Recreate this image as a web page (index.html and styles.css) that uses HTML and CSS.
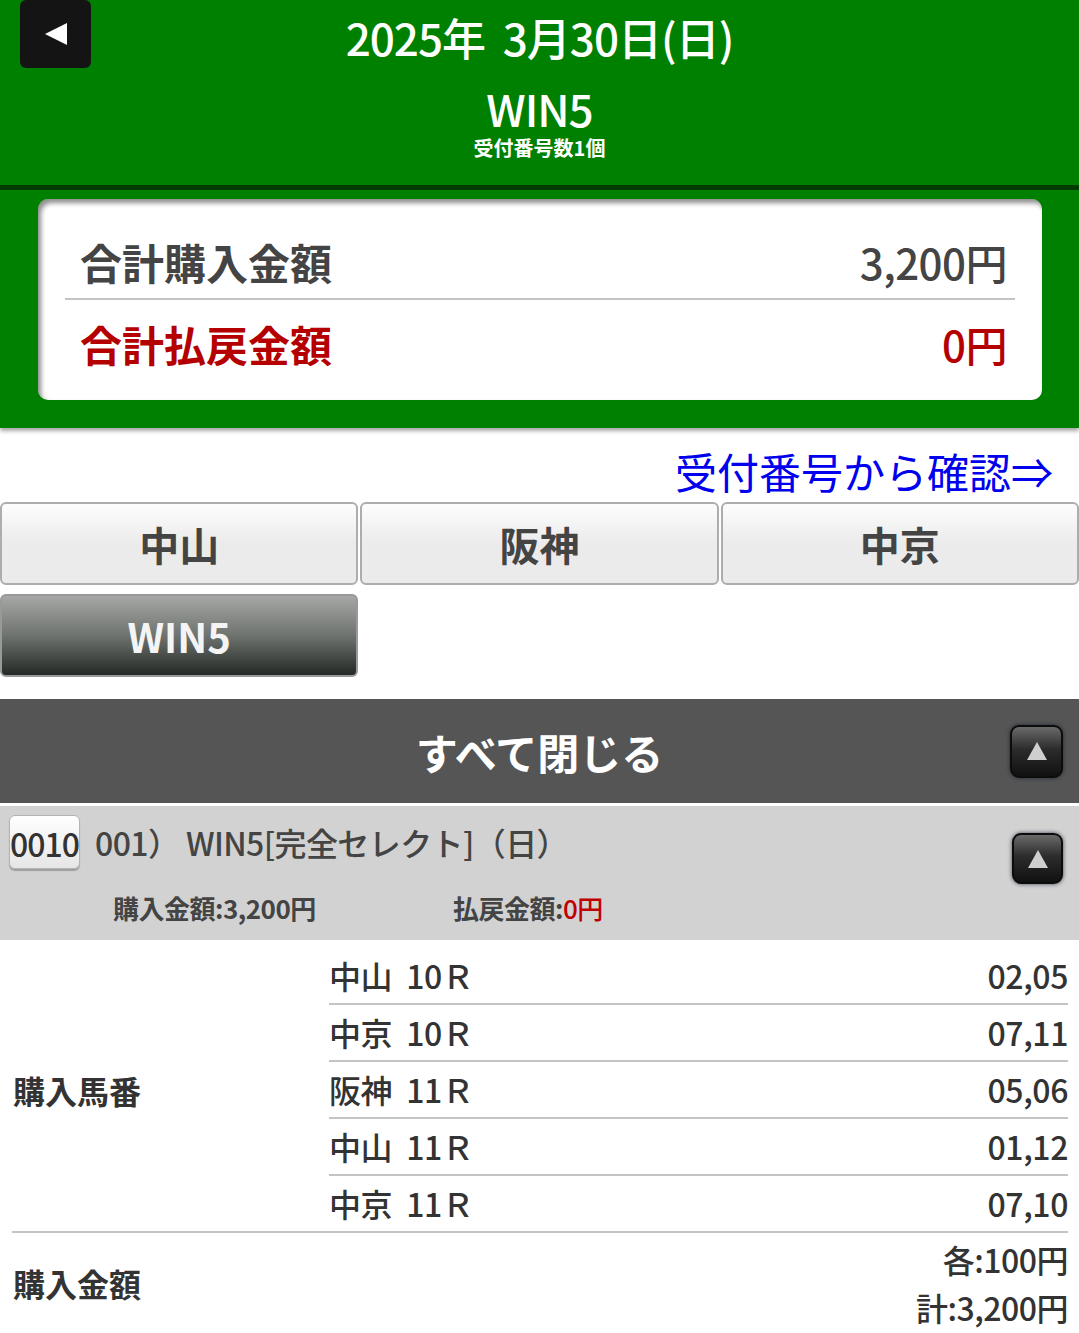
FILE: index.html
```html
<!DOCTYPE html>
<html lang="ja">
<head>
  <meta charset="UTF-8" />
  <meta name="viewport" content="width=device-width, initial-scale=1.0"/>
  <title>WIN5 照会結果</title>
  <link rel="stylesheet" href="styles.css">
</head>
<body>
  <header class="top-bar">
    <a href="#" class="back-btn">
      <svg width="22" height="22" viewBox="0 0 22 22"><polygon points="0,11 22,0 22,22" fill="#fff"/></svg>
    </a>
    <h1 class="race-date">2025年&nbsp;&nbsp;3月30日(日)</h1>
    <div class="bet-type">WIN5</div>
    <div class="ticket-count">受付番号数1個</div>
  </header>

  <section class="summary">
    <div class="summary-card">
      <div class="summary-row">
        <span class="summary-label">合計購入金額</span>
        <span class="summary-value">3,200円</span>
      </div>
      <div class="summary-row refund">
        <span class="summary-label">合計払戻金額</span>
        <span class="summary-value">0円</span>
      </div>
    </div>
  </section>

  <div class="confirm-link">
    <a href="#">受付番号から確認⇒</a>
  </div>

  <nav class="venue-tabs">
    <button class="venue-tab">中山</button>
    <button class="venue-tab">阪神</button>
    <button class="venue-tab">中京</button>
    <button class="venue-tab active">WIN5</button>
  </nav>

  <div class="collapse-all">
    <span></span>
    <span class="collapse-title">すべて閉じる</span>
    <button class="toggle-btn">
      <svg width="20" height="18" viewBox="0 0 20 18"><polygon points="10,0 20,18 0,18" fill="#cfcfcf"/></svg>
    </button>
  </div>

  <div class="ticket-head">
    <div class="ticket-info">
      <div class="ticket-title">
        <span class="ticket-no">0010</span>
        <span>001）&nbsp;WIN5[完全セレクト]（日）</span>
      </div>
      <div class="ticket-amounts">
        <span class="amount-buy">購入金額:3,200円</span>
        <span>払戻金額:<em class="refund-amount">0円</em></span>
      </div>
    </div>
    <button class="toggle-btn">
      <svg width="20" height="18" viewBox="0 0 20 18"><polygon points="10,0 20,18 0,18" fill="#cfcfcf"/></svg>
    </button>
  </div>

  <div class="ticket-detail">
    <div class="detail-row">
      <div class="detail-label">購入馬番</div>
      <div class="race-list">
        <div class="race-row"><span><span class="venue">中山</span>10Ｒ</span><span>02,05</span></div>
        <div class="race-row"><span><span class="venue">中京</span>10Ｒ</span><span>07,11</span></div>
        <div class="race-row"><span><span class="venue">阪神</span>11Ｒ</span><span>05,06</span></div>
        <div class="race-row"><span><span class="venue">中山</span>11Ｒ</span><span>01,12</span></div>
        <div class="race-row"><span><span class="venue">中京</span>11Ｒ</span><span>07,10</span></div>
      </div>
    </div>
    <div class="detail-row last">
      <div class="detail-label">購入金額</div>
      <div class="amount-list">
        <div>各:100円</div>
        <div>計:3,200円</div>
      </div>
    </div>
  </div>
</body>
</html>
```

FILE: styles.css
```css
body {
  margin: 0;
  padding: 0;
  background-color: #fff;
  color: #444;
  font-family: "Noto Sans CJK JP", "Noto Sans", sans-serif;
}

button {
  font-family: inherit;
  cursor: pointer;
}

/* header */
.top-bar {
  position: relative;
  background-color: #008000;
  color: #fff;
  text-align: center;
  padding-bottom: 23px;
  border-bottom: 5px solid #003c00;
}

.back-btn {
  position: absolute;
  top: 0;
  left: 20px;
  width: 71px;
  height: 68px;
  background-color: #141414;
  border-radius: 6px;
  display: flex;
  align-items: center;
  justify-content: center;
}

.race-date {
  margin: 0;
  font-size: 44px;
  font-weight: 500;
  line-height: 74px;
  letter-spacing: -1px;
}

.bet-type {
  margin-top: 8px;
  font-size: 44px;
  font-weight: 500;
  line-height: 52px;
  letter-spacing: -1px;
}

.ticket-count {
  font-size: 20px;
  font-weight: bold;
  line-height: 28px;
}

/* totals */
.summary {
  background-color: #008000;
  padding: 9px 37px 28px 38px;
  box-shadow: 0 3px 4px rgba(0, 0, 0, 0.35);
}

.summary-card {
  background-color: #fff;
  border-radius: 10px;
  padding: 25px 27px 15px;
  box-shadow: inset 3px 4px 5px rgba(0, 0, 0, 0.45);
}

.summary-row {
  display: flex;
  justify-content: space-between;
  padding: 8px 8px 6px 15px;
  line-height: 60px;
  font-size: 42px;
  border-bottom: 2px solid #c4c4c4;
}

.summary-row.refund {
  padding-top: 14px;
  padding-bottom: 11px;
  border-bottom: none;
  color: #b40000;
}

.summary-label {
  font-weight: bold;
}

.summary-value {
  font-weight: 500;
  letter-spacing: -0.5px;
}

/* link */
.confirm-link {
  text-align: right;
  padding: 18px 26px 6px 0;
  line-height: 50px;
  font-size: 42px;
}

.confirm-link a {
  color: #0000ee;
  text-decoration: none;
}

/* venue tabs */
.venue-tabs {
  display: grid;
  grid-template-columns: repeat(3, 1fr);
  gap: 9px 2px;
}

.venue-tab {
  height: 83px;
  border: 2px solid #adadad;
  border-radius: 6px;
  background: linear-gradient(#fdfdfd, #ebebeb 50%, #ebebeb);
  color: #444;
  font-size: 40px;
  font-weight: bold;
  padding: 0;
}

.venue-tab.active {
  border-color: #999;
  background: linear-gradient(#a5a8a5, #6f736f 50%, #252925);
  color: #f4f4f4;
}

/* collapse bar */
.collapse-all {
  margin-top: 22px;
  height: 104px;
  background-color: #555;
  color: #fff;
  display: grid;
  grid-template-columns: 1fr auto 1fr;
  align-items: center;
  border-bottom: 3px solid #fff;
}

.collapse-title {
  font-size: 42px;
  font-weight: bold;
}

.toggle-btn {
  justify-self: end;
  width: 53px;
  height: 53px;
  margin-right: 16px;
  padding: 0;
  border: 2px solid #0c0c0c;
  border-radius: 9px;
  background: linear-gradient(#6a6a6a, #2c2c2c 45%, #111);
  box-shadow: 0 0 4px rgba(20, 30, 50, 0.8);
  display: flex;
  align-items: center;
  justify-content: center;
}

/* ticket header */
.ticket-head {
  background-color: #d2d2d2;
  display: flex;
  align-items: flex-start;
  padding: 9px 0 12px 9px;
}

.ticket-info {
  flex: 1;
}

.ticket-title {
  display: flex;
  align-items: center;
  gap: 15px;
  font-size: 32px;
  font-weight: 500;
  letter-spacing: -0.6px;
  color: #444;
}

.ticket-no {
  width: 71px;
  height: 54px;
  line-height: 54px;
  text-align: center;
  border: 1px solid #b4b4b4;
  border-radius: 6px;
  background: linear-gradient(#fff, #e6e6e6);
  box-shadow: 0 2px 1px rgba(0, 0, 0, 0.25);
  color: #333;
  box-sizing: border-box;
  letter-spacing: -1px;
}

.ticket-amounts {
  display: flex;
  margin-top: 19px;
  padding-left: 104px;
  line-height: 40px;
  font-size: 26px;
  font-weight: bold;
  letter-spacing: -0.5px;
}

.amount-buy {
  width: 340px;
}

.refund-amount {
  font-style: normal;
  font-weight: 500;
  color: #c00000;
}

.ticket-head .toggle-btn {
  margin-top: 18px;
  margin-right: 16px;
  width: 51px;
  height: 51px;
}

/* detail table */
.ticket-detail {
  padding: 8px 11px 0 12px;
  color: #333;
  font-size: 32px;
}

.detail-row {
  display: grid;
  grid-template-columns: 317px 1fr;
  align-items: center;
  border-bottom: 2px solid #c4c4c4;
}

.detail-row.last {
  border-bottom: none;
  padding-top: 2px;
}

.detail-label {
  font-weight: bold;
  padding-left: 1px;
}

.race-row {
  display: flex;
  justify-content: space-between;
  height: 55px;
  line-height: 55px;
  font-weight: 500;
  letter-spacing: -0.4px;
  border-bottom: 2px solid #c4c4c4;
}

.race-row:last-child {
  border-bottom: none;
}

.venue {
  margin-right: 14px;
}

.amount-list {
  text-align: right;
  line-height: 48px;
  font-weight: 500;
  letter-spacing: -0.5px;
}
```
